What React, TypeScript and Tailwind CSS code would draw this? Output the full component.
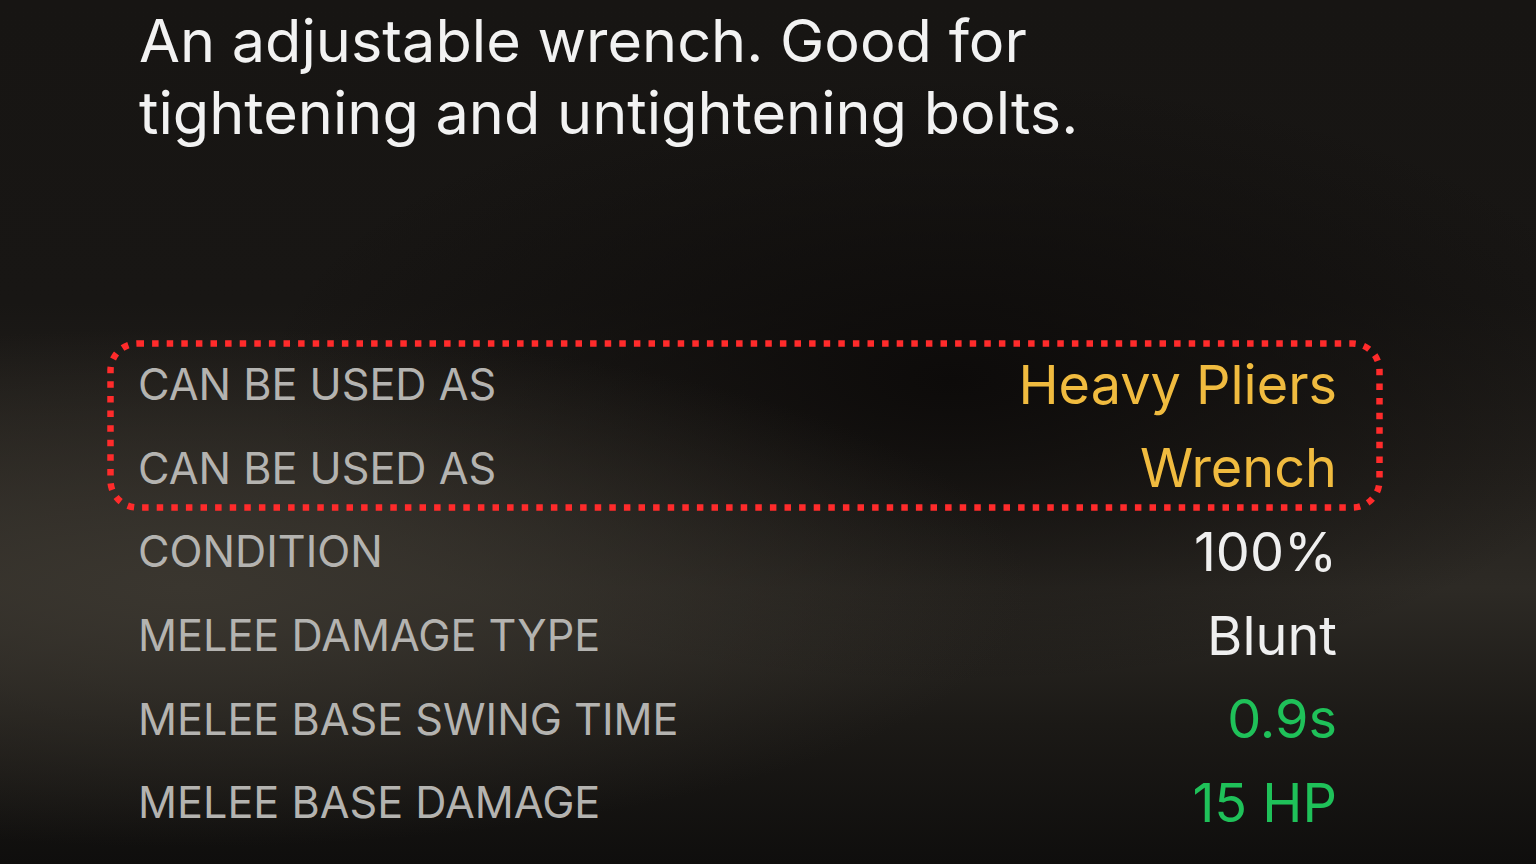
import React from 'react';

type Stat = { label: string; value: string; tone: 'gold' | 'white' | 'green' };

const usedAs: Stat[] = [
  { label: 'CAN BE USED AS', value: 'Heavy Pliers', tone: 'gold' },
  { label: 'CAN BE USED AS', value: 'Wrench', tone: 'gold' },
];

const stats: Stat[] = [
  { label: 'CONDITION', value: '100%', tone: 'white' },
  { label: 'MELEE DAMAGE TYPE', value: 'Blunt', tone: 'white' },
  { label: 'MELEE BASE SWING TIME', value: '0.9s', tone: 'green' },
  { label: 'MELEE BASE DAMAGE', value: '15 HP', tone: 'green' },
];

const toneClass = {
  gold: 'text-[#f0bb3f]',
  white: 'text-[#efefef]',
  green: 'text-[#1fc159]',
};

function StatRow({ stat }: { stat: Stat }) {
  return (
    <div className="flex h-[83.6px] items-center justify-between pl-[31px] pr-[46px]">
      <span className="text-[43.2px] leading-none text-[#b4b3b0]">{stat.label}</span>
      <span className={`text-[54px] leading-none ${toneClass[stat.tone]}`}>{stat.value}</span>
    </div>
  );
}

export default function App() {
  return (
    <div className="h-[864px] w-[1536px] overflow-hidden bg-[radial-gradient(ellipse_55%_30%_at_12%_68%,#3a362f_0%,rgba(58,54,47,0)_100%),radial-gradient(ellipse_45%_35%_at_62%_44%,#0d0b0a_0%,rgba(13,11,10,0)_100%),linear-gradient(to_bottom,#171513_0%,#181614_35%,#24211d_55%,#2d2a25_68%,#1b1916_84%,#0f0e0d_100%)] font-['Inter','Noto_Sans',sans-serif] antialiased">
      {/* item description */}
      <p className="pl-[139px] pt-[4px] text-[59.4px] leading-[72px] text-[#f2f2f2]">
        An adjustable wrench. Good for
        <br />
        tightening and untightening bolts.
      </p>

      <div className="ml-[107px] mt-[192px] w-[1276px]">
        {/* highlighted rows */}
        <div className="relative pt-[3px]">
          <svg className="pointer-events-none absolute inset-0" width="1276" height="171" viewBox="0 0 1276 171">
            <rect
              x="3.5"
              y="3.5"
              width="1269"
              height="164"
              rx="27"
              fill="none"
              stroke="#ff2b2b"
              strokeWidth="6.5"
              strokeDasharray="6.5 8.1"
            />
          </svg>
          {usedAs.map((s, i) => (
            <StatRow key={i} stat={s} />
          ))}
        </div>
        {stats.map((s) => (
          <StatRow key={s.label} stat={s} />
        ))}
      </div>
    </div>
  );
}
